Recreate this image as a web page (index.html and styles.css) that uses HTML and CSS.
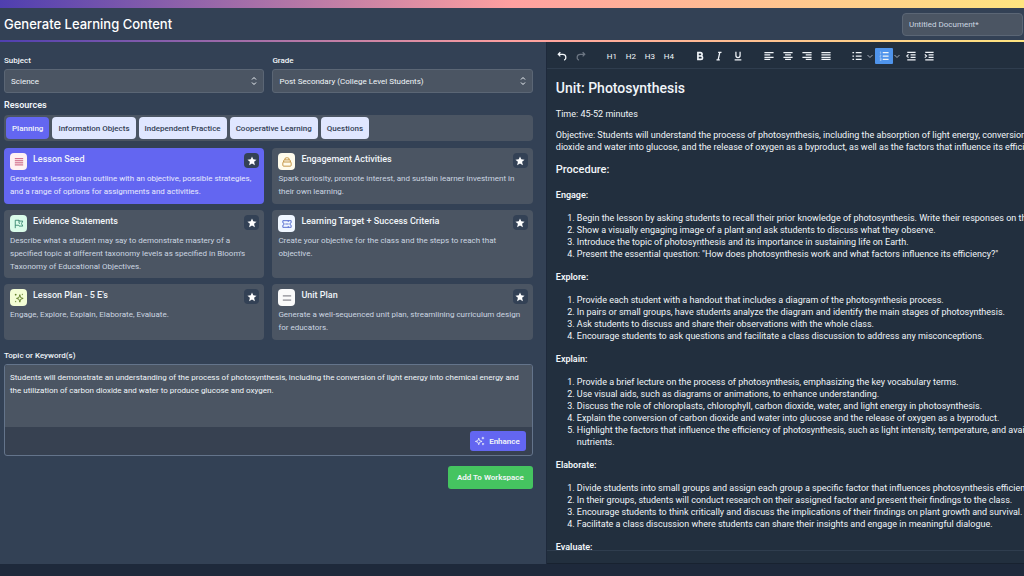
FILE: index.html
```html
<!DOCTYPE html>
<html lang="en">
<head>
    <meta charset="UTF-8">
    <meta name="viewport" content="width=device-width, initial-scale=1.0">
    <title>Generate Learning Content</title>
    <link rel="stylesheet" href="styles.css">
</head>
<body>
    <div class="top-bar"></div>
    <header class="header">
        <h1>Generate Learning Content</h1>
        <input class="doc-title" type="text" aria-label="Document title" placeholder="Untitled Document*">
    </header>
    <div class="header-line"></div>

    <main class="main">
        <section class="panel">
            <div class="columns">
                <div class="form-group">
                    <label for="subject">Subject</label>
                    <div class="select-wrap">
                        <select id="subject">
                            <option>Science</option>
                        </select>
                        <svg viewBox="0 0 8 10"><path d="M2 3.5 4 1.5l2 2M2 6.5l2 2 2-2"/></svg>
                    </div>
                </div>
                <div class="form-group">
                    <label for="grade">Grade</label>
                    <div class="select-wrap">
                        <select id="grade">
                            <option>Post Secondary (College Level Students)</option>
                        </select>
                        <svg viewBox="0 0 8 10"><path d="M2 3.5 4 1.5l2 2M2 6.5l2 2 2-2"/></svg>
                    </div>
                </div>
            </div>

            <h2>Resources</h2>
            <div class="tabs">
                <button class="tab active">Planning</button>
                <button class="tab">Information Objects</button>
                <button class="tab">Independent Practice</button>
                <button class="tab">Cooperative Learning</button>
                <button class="tab">Questions</button>
            </div>

            <div class="cards">
                <article class="card selected">
                    <div class="card-head">
                        <span class="card-icon rose"><svg viewBox="0 0 24 24"><path d="M2 4h20M2 9h20M2 14h20M2 19h20"/></svg></span>
                        <h3>Lesson Seed</h3>
                        <button class="star" aria-label="Favorite Lesson Seed"><svg viewBox="0 0 24 24"><use href="#star"/></svg></button>
                    </div>
                    <p>Generate a lesson plan outline with an objective, possible strategies, and a range of options for assignments and activities.</p>
                </article>
                <article class="card">
                    <div class="card-head">
                        <span class="card-icon amber"><svg viewBox="0 0 24 24"><path d="M4 12h16a2 2 0 0 1 2 2v6a2 2 0 0 1-2 2H4a2 2 0 0 1-2-2v-6a2 2 0 0 1 2-2zM4 12V9a2 2 0 0 1 2-2h12a2 2 0 0 1 2 2v3M7 7V5a3 3 0 0 1 3-3h4a3 3 0 0 1 3 3v2"/></svg></span>
                        <h3>Engagement Activities</h3>
                        <button class="star" aria-label="Favorite Engagement Activities"><svg viewBox="0 0 24 24"><use href="#star"/></svg></button>
                    </div>
                    <p>Spark curiosity, promote interest, and sustain learner investment in their own learning.</p>
                </article>
                <article class="card">
                    <div class="card-head">
                        <span class="card-icon emerald"><svg viewBox="0 0 24 24"><path d="M3 22V3h9l1 2h8l-3 6 3 6h-9l-1-2H3M12 3v7l2 1"/></svg></span>
                        <h3>Evidence Statements</h3>
                        <button class="star" aria-label="Favorite Evidence Statements"><svg viewBox="0 0 24 24"><use href="#star"/></svg></button>
                    </div>
                    <p>Describe what a student may say to demonstrate mastery of a specified topic at different taxonomy levels as specified in Bloom's Taxonomy of Educational Objectives.</p>
                </article>
                <article class="card">
                    <div class="card-head">
                        <span class="card-icon blue"><svg viewBox="0 0 24 24"><path d="M2 4h20v5a3 3 0 0 0 0 6v5H2v-5a3 3 0 0 0 0-6zM15 4v3M15 17v3M8 12h8"/></svg></span>
                        <h3>Learning Target + Success Criteria</h3>
                        <button class="star" aria-label="Favorite Learning Target"><svg viewBox="0 0 24 24"><use href="#star"/></svg></button>
                    </div>
                    <p>Create your objective for the class and the steps to reach that objective.</p>
                </article>
                <article class="card">
                    <div class="card-head">
                        <span class="card-icon lime"><svg viewBox="0 0 24 24"><path d="m14 4 2 7 6 2-6 2-2 7-2-7-6-2 6-2zM4 2v4M2 4h4M4 19v3M20 2v3"/></svg></span>
                        <h3>Lesson Plan - 5 E's</h3>
                        <button class="star" aria-label="Favorite Lesson Plan"><svg viewBox="0 0 24 24"><use href="#star"/></svg></button>
                    </div>
                    <p>Engage, Explore, Explain, Elaborate, Evaluate.</p>
                </article>
                <article class="card">
                    <div class="card-head">
                        <span class="card-icon gray"><svg viewBox="0 0 24 24"><path d="M2 7h20M2 17h20"/></svg></span>
                        <h3>Unit Plan</h3>
                        <button class="star" aria-label="Favorite Unit Plan"><svg viewBox="0 0 24 24"><use href="#star"/></svg></button>
                    </div>
                    <p>Generate a well-sequenced unit plan, streamlining curriculum design for educators.</p>
                </article>
            </div>

            <label for="topic">Topic or Keyword(s)</label>
            <div class="topic-box">
                <textarea id="topic">Students will demonstrate an understanding of the process of photosynthesis, including the conversion of light energy into chemical energy and the utilization of carbon dioxide and water to produce glucose and oxygen.</textarea>
                <div class="topic-footer">
                    <button class="enhance-btn">
                        <svg viewBox="0 0 24 24"><path d="m9 5 2 6 6 2-6 2-2 6-2-6-6-2 6-2zM19 2v6M16 5h6M19 17v5M17 19h5"/></svg>
                        Enhance
                    </button>
                </div>
            </div>
            <button class="add-btn">Add To Workspace</button>
        </section>

        <section class="editor">
            <div class="toolbar">
                <div class="tool-group">
                    <button class="tool" aria-label="Undo"><svg viewBox="0 0 24 24"><path d="M8 3 3 8l5 5M3 8h11c9 0 9 12 3 14"/></svg></button>
                    <button class="tool" aria-label="Redo" disabled><svg viewBox="0 0 24 24"><path d="m16 3 5 5-5 5M21 8H10c-9 0-9 12-3 14"/></svg></button>
                </div>
                <div class="tool-group">
                    <button class="tool">H1</button>
                    <button class="tool">H2</button>
                    <button class="tool">H3</button>
                    <button class="tool">H4</button>
                </div>
                <div class="tool-group">
                    <button class="tool" aria-label="Bold"><svg viewBox="0 0 24 24"><path class="thick" d="M7 4h6a4 4 0 0 1 0 8H7zM7 12h7a4 4 0 0 1 0 8H7z"/></svg></button>
                    <button class="tool" aria-label="Italic"><svg viewBox="0 0 24 24"><path d="M10 3h8M6 21h8M14 3l-4 18"/></svg></button>
                    <button class="tool" aria-label="Underline"><svg viewBox="0 0 24 24"><path d="M7 2v9a5 5 0 0 0 10 0V2M4 21h16"/></svg></button>
                </div>
                <div class="tool-group">
                    <button class="tool" aria-label="Align left"><svg viewBox="0 0 24 24"><path d="M1 4h22M1 9h14M1 15h22M1 20h14"/></svg></button>
                    <button class="tool" aria-label="Align center"><svg viewBox="0 0 24 24"><path d="M1 4h22M5 9h14M1 15h22M5 20h14"/></svg></button>
                    <button class="tool" aria-label="Align right"><svg viewBox="0 0 24 24"><path d="M1 4h22M9 9h14M1 15h22M9 20h14"/></svg></button>
                    <button class="tool" aria-label="Justify"><svg viewBox="0 0 24 24"><path d="M1 4h22M1 9h22M1 15h22M1 20h22"/></svg></button>
                </div>
                <div class="tool-group lists">
                    <button class="tool" aria-label="Bullet list"><svg viewBox="0 0 24 24"><path d="M1 4h4M1 12h4M1 20h4M9 4h14M9 12h14M9 20h14"/></svg></button>
                    <button class="tool caret" aria-label="Bullet list options"><svg viewBox="0 0 12 12"><path d="m1 4 5 5 5-5"/></svg></button>
                    <button class="tool active" aria-label="Numbered list"><svg viewBox="0 0 24 24"><path d="M9 4h14M9 12h14M9 20h14"/><path class="thin" d="m2 3 2-1v5M2 10h3l-3 4h3M2 17h3v6H2M2 20h3"/></svg></button>
                    <button class="tool caret" aria-label="Numbered list options"><svg viewBox="0 0 12 12"><path d="m1 4 5 5 5-5"/></svg></button>
                    <button class="tool" aria-label="Outdent"><svg viewBox="0 0 24 24"><path d="M3 3h20M11 9h12M11 15h12M3 21h20M6 8l-4 4 4 4"/></svg></button>
                    <button class="tool" aria-label="Indent"><svg viewBox="0 0 24 24"><path d="M3 3h20M11 9h12M11 15h12M3 21h20M2 8l4 4-4 4"/></svg></button>
                </div>
            </div>
            <div class="document">
                <div class="page">
                    <h2>Unit: Photosynthesis</h2>
                    <p>Time: 45-52 minutes</p>
                    <p>Objective: Students will understand the process of photosynthesis, including the absorption of light energy, conversion of carbon dioxide and water into glucose, and the release of oxygen as a byproduct, as well as the factors that influence its efficiency.</p>
                    <h3>Procedure:</h3>
                    <h4>Engage:</h4>
                    <ol>
                        <li>Begin the lesson by asking students to recall their prior knowledge of photosynthesis. Write their responses on the board.</li>
                        <li>Show a visually engaging image of a plant and ask students to discuss what they observe.</li>
                        <li>Introduce the topic of photosynthesis and its importance in sustaining life on Earth.</li>
                        <li>Present the essential question: "How does photosynthesis work and what factors influence its efficiency?"</li>
                    </ol>
                    <h4>Explore:</h4>
                    <ol>
                        <li>Provide each student with a handout that includes a diagram of the photosynthesis process.</li>
                        <li>In pairs or small groups, have students analyze the diagram and identify the main stages of photosynthesis.</li>
                        <li>Ask students to discuss and share their observations with the whole class.</li>
                        <li>Encourage students to ask questions and facilitate a class discussion to address any misconceptions.</li>
                    </ol>
                    <h4>Explain:</h4>
                    <ol>
                        <li>Provide a brief lecture on the process of photosynthesis, emphasizing the key vocabulary terms.</li>
                        <li>Use visual aids, such as diagrams or animations, to enhance understanding.</li>
                        <li>Discuss the role of chloroplasts, chlorophyll, carbon dioxide, water, and light energy in photosynthesis.</li>
                        <li>Explain the conversion of carbon dioxide and water into glucose and the release of oxygen as a byproduct.</li>
                        <li>Highlight the factors that influence the efficiency of photosynthesis, such as light intensity, temperature, and availability of nutrients.</li>
                    </ol>
                    <h4>Elaborate:</h4>
                    <ol>
                        <li>Divide students into small groups and assign each group a specific factor that influences photosynthesis efficiency.</li>
                        <li>In their groups, students will conduct research on their assigned factor and present their findings to the class.</li>
                        <li>Encourage students to think critically and discuss the implications of their findings on plant growth and survival.</li>
                        <li>Facilitate a class discussion where students can share their insights and engage in meaningful dialogue.</li>
                    </ol>
                    <h4>Evaluate:</h4>
                </div>
            </div>
            <div class="status-bar"></div>
        </section>
    </main>
    <footer class="footer"></footer>

    <svg class="defs">
        <symbol id="star" viewBox="0 0 24 24"><path d="m12 1 3 7 8 1-6 5 2 8-7-4-7 4 2-8-6-5 8-1z"/></symbol>
    </svg>
</body>
</html>
```
FILE: styles.css
```css
* {
    margin: 0;
    padding: 0;
    box-sizing: border-box;
}

body {
    display: flex;
    flex-direction: column;
    height: 100vh;
    overflow: hidden;
    font-family: Roboto, Inter, sans-serif;
    font-size: 8px;
    background: #1e293b;
    color: #f1f5f9;
}

button, input, select, textarea {
    font: inherit;
    color: inherit;
    border: none;
}

button {
    cursor: pointer;
}

svg {
    fill: none;
    stroke: currentColor;
    stroke-width: 2;
}

.defs {
    display: none;
}

.top-bar, .header-line {
    flex: none;
    height: 8px;
    background: linear-gradient(90deg, #4f3fb0 0%, #ffa0a0 50%, #ffe580 100%);
}

.header-line {
    height: 2px;
}

.header {
    flex: none;
    display: flex;
    align-items: center;
    justify-content: space-between;
    height: 32px;
    padding: 0 1px 0 4px;
    background: #334155;
}

.header h1 {
    font-family: Inter, sans-serif;
    font-size: 13px;
    font-weight: 500;
    color: #fff;
}

.doc-title {
    width: 121px;
    height: 23px;
    padding: 0 6px;
    background: #4b5563;
    border: 1px solid #5b6675;
    border-radius: 4px;
}

.doc-title::placeholder {
    color: #cbd5e1;
}

.main {
    flex: 1;
    min-height: 0;
    display: flex;
}

/* Left panel */
.panel {
    flex: none;
    width: 53.4%;
    padding: 13px 13px 0 4px;
    background: #334155;
    border-right: 1px solid #1e293b;
}

.columns, .cards {
    display: grid;
    grid-template-columns: 1fr 1fr;
    column-gap: 8px;
}

.panel label {
    display: block;
    margin-bottom: 2px;
    font-weight: 500;
    line-height: 12px;
}

.select-wrap {
    position: relative;
}

.select-wrap select {
    appearance: none;
    display: block;
    width: 100%;
    height: 24px;
    padding: 0 6px;
    background: #4b5563;
    border: 1px solid #5b6675;
    border-radius: 3px;
}

.select-wrap svg {
    position: absolute;
    top: 7px;
    right: 6px;
    width: 8px;
    height: 10px;
    stroke-width: 1;
    pointer-events: none;
}

.panel h2 {
    margin: 6px 0 3px;
    font-size: 9px;
    font-weight: 600;
    line-height: 13px;
}

.tabs {
    display: flex;
    gap: 3px;
    padding: 2px;
    background: #4b5563;
    border-radius: 4px;
}

.tab {
    height: 22px;
    padding: 0 6px;
    background: #e0e7ff;
    color: #334155;
    font-weight: 500;
    border-radius: 4px;
}

.tab.active {
    background: #6366f1;
    color: #f1f5f9;
}

.cards {
    row-gap: 6px;
    margin: 7px 0 10px;
}

.card {
    min-height: 56px;
    padding: 5px 5px 5px 6px;
    background: #4b5563;
    border-radius: 4px;
}

.card.selected {
    background: #6366f1;
}

.card-head {
    display: flex;
    gap: 6px;
    height: 19px;
}

.card h3 {
    flex: 1;
    font-size: 9px;
    font-weight: 500;
    line-height: 12px;
}

.card p {
    font-size: 8px;
    line-height: 13px;
    color: #cbd5e1;
}

.card.selected p {
    color: #e8eafe;
}

.card-icon {
    display: grid;
    place-items: center;
    width: 17px;
    height: 17px;
    border-radius: 4px;
}

.card-icon svg {
    width: 10px;
    height: 10px;
}

.rose { background: #fff1f2; color: #be3a63; }
.amber { background: #fffbeb; color: #b98328; }
.emerald { background: #d9fbe9; color: #2c8067; }
.blue { background: #eff6ff; color: #4059c9; }
.lime { background: #f3fdd5; color: #55751c; }
.gray { background: #fafafa; color: #52525b; }

.star {
    display: grid;
    place-items: center;
    width: 15px;
    height: 15px;
    background: #334155;
    border-radius: 4px;
    color: #fff;
}

.star svg {
    width: 10px;
    height: 10px;
    fill: currentColor;
    stroke: none;
}

.topic-box {
    background: #374151;
    border: 1px solid #64748b;
    border-radius: 3px;
    overflow: hidden;
}

.topic-box textarea {
    display: block;
    width: 100%;
    height: 62px;
    padding: 6px 5px;
    background: #4b5563;
    outline: none;
    resize: none;
    line-height: 13px;
}

.topic-footer {
    display: flex;
    justify-content: flex-end;
    padding: 4px 6px;
}

.enhance-btn {
    display: flex;
    align-items: center;
    gap: 4px;
    height: 20px;
    padding: 0 6px 0 5px;
    background: #6366f1;
    border-radius: 3px;
    font-weight: 600;
}

.enhance-btn svg {
    width: 10px;
    height: 10px;
}

.add-btn {
    display: block;
    height: 23px;
    margin: 10px 0 0 auto;
    padding: 0 9px;
    background: #45c460;
    border-radius: 3px;
    font-weight: 600;
}

/* Editor */
.editor {
    flex: 1;
    min-width: 0;
    display: flex;
    flex-direction: column;
    background: #222f3e;
    overflow: hidden;
}

.toolbar {
    flex: none;
    display: flex;
    gap: 13px;
    height: 27px;
    padding: 6px 6px 4px;
    border-bottom: 1px solid #2f3d4e;
}

.tool-group {
    display: flex;
    gap: 1px;
}

.tool-group.lists {
    gap: 0;
}

.tool {
    display: grid;
    place-items: center;
    width: 18px;
    height: 16px;
    background: none;
    border-radius: 1px;
}

.tool svg {
    width: 10px;
    height: 10px;
    stroke-width: 3;
}

.tool .thick {
    stroke-width: 4;
}

.tool .thin {
    stroke-width: 1;
}

.tool:disabled {
    color: #6c7683;
}

.tool.active {
    background: #4f94ec;
}

.tool.caret {
    width: 9px;
    color: #a3acb8;
}

.tool.caret svg {
    width: 6px;
    height: 6px;
    stroke-width: 2;
}

.document {
    flex: 1;
    min-height: 0;
    overflow: hidden;
}

.page {
    min-width: 548px;
    padding: 9px;
    font-size: 9px;
    line-height: 12px;
}

.page h2 {
    margin-bottom: 10px;
    font-size: 14px;
    font-weight: 500;
    line-height: 20px;
}

.page p {
    margin-bottom: 9px;
}

.page h3 {
    margin: 10px 0 12px;
    font-size: 11px;
    font-weight: 500;
    line-height: 14px;
}

.page h4 {
    margin: 11px 0;
    font-size: 9px;
    font-weight: 600;
}

.page ol {
    padding-left: 21px;
}

.status-bar {
    flex: none;
    height: 14px;
    border-top: 1px solid #2f3d4e;
    border-bottom: 1px solid #182230;
}

.footer {
    flex: none;
    height: 12px;
    background: #1e293b;
}
```
